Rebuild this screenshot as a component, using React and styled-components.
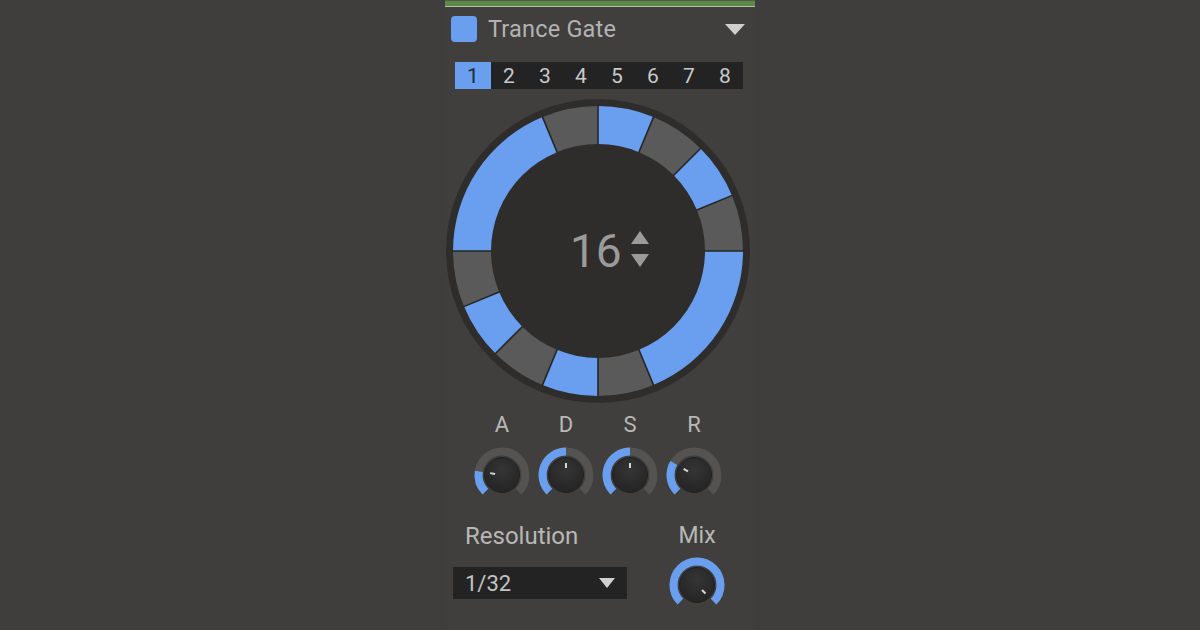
import React from 'react';
import styled, { createGlobalStyle } from 'styled-components';

const BLUE = '#6a9ff0';
const GRAY_SEG = '#5a5a5a';
const DARK = '#2e2d2c';

const GlobalStyle = createGlobalStyle`
  html, body {
    margin: 0;
    padding: 0;
    background: #3f3e3c;
  }
  body {
    font-family: Roboto, "Noto Sans", sans-serif;
  }
`;

const Page = styled.div`
  width: 1200px;
  height: 630px;
  display: flex;
  justify-content: center;
  overflow: hidden;
`;

const Panel = styled.div`
  width: 310px;
  display: flex;
  flex-direction: column;
  background: #403f3d;
`;

const TopBar = styled.div`
  height: 5px;
  background: #5b8a48;
  border-top: 1px solid #55584f;
  border-bottom: 1px solid #b9bdb4;
`;

const Header = styled.div`
  margin-top: 9px;
  height: 26px;
  padding: 0 10px 0 6px;
  display: flex;
  align-items: center;
  gap: 11px;
`;

const ColorSwatch = styled.div`
  width: 26px;
  height: 26px;
  border-radius: 4px;
  background: ${BLUE};
`;

const Title = styled.div`
  flex: 1;
  font-size: 23.5px;
  color: #b3b3b3;
  letter-spacing: 0.2px;
`;

const Triangle = styled.div`
  width: 0;
  height: 0;
  border-left: ${(p) => p.$w / 2}px solid transparent;
  border-right: ${(p) => p.$w / 2}px solid transparent;
  border-${(p) => (p.$up ? 'bottom' : 'top')}: ${(p) => p.$h}px solid ${(p) => p.$color};
`;

const Tabs = styled.div`
  margin: 20px 0 0 10px;
  width: 288px;
  height: 27px;
  display: grid;
  grid-template-columns: repeat(8, 1fr);
  background: #232323;
`;

const Tab = styled.div`
  display: flex;
  align-items: center;
  justify-content: center;
  font-size: 21px;
  color: ${(p) => (p.$active ? '#1f2a3a' : '#c9c9c9')};
  background: ${(p) => (p.$active ? BLUE : 'transparent')};
`;

const RingWrap = styled.div`
  position: relative;
  margin: 10px 0 0 1px;
  width: 304px;
  height: 304px;
`;

const StepCount = styled.div`
  position: absolute;
  left: 124px;
  top: 50%;
  transform: translateY(-50%);
  display: flex;
  align-items: center;
  gap: 9px;
`;

const CountText = styled.div`
  font-size: 46px;
  line-height: 46px;
  color: #9b9b9b;
`;

const Arrows = styled.div`
  display: flex;
  flex-direction: column;
  gap: 10px;
  margin-top: -4px;
`;

const Adsr = styled.div`
  margin: 10px 0 0 25px;
  display: grid;
  grid-template-columns: repeat(4, 64px);
  row-gap: 8px;
`;

const Label = styled.div`
  font-size: ${(p) => p.$size || 22}px;
  line-height: 24px;
  color: #b8b8b8;
  text-align: ${(p) => p.$align || 'center'};
  padding-left: ${(p) => p.$pad || 0}px;
`;

const KnobCell = styled.div`
  display: flex;
  justify-content: center;
`;

const Bottom = styled.div`
  margin: 19px 0 0 8px;
  display: flex;
  gap: 40px;
`;

const Column = styled.div`
  display: flex;
  flex-direction: column;
  gap: ${(p) => p.$gap}px;
  width: ${(p) => p.$w}px;
`;

const Select = styled.div`
  height: 32px;
  background: #232323;
  display: flex;
  align-items: center;
  justify-content: space-between;
  padding: 0 12px 0 12px;
  font-size: 22px;
  color: #c3c3c3;
`;

const pt = (cx, cy, r, a) => {
  const t = (a * Math.PI) / 180;
  return [cx + r * Math.sin(t), cy - r * Math.cos(t)];
};

const sector = (cx, cy, r0, r1, a0, a1) => {
  const large = a1 - a0 > 180 ? 1 : 0;
  const [x1, y1] = pt(cx, cy, r1, a0);
  const [x2, y2] = pt(cx, cy, r1, a1);
  const [x3, y3] = pt(cx, cy, r0, a1);
  const [x4, y4] = pt(cx, cy, r0, a0);
  return `M${x1} ${y1} A${r1} ${r1} 0 ${large} 1 ${x2} ${y2} L${x3} ${y3} A${r0} ${r0} 0 ${large} 0 ${x4} ${y4} Z`;
};

const arc = (cx, cy, r, a0, a1) => {
  const large = a1 - a0 > 180 ? 1 : 0;
  const [x1, y1] = pt(cx, cy, r, a0);
  const [x2, y2] = pt(cx, cy, r, a1);
  return `M${x1} ${y1} A${r} ${r} 0 ${large} 1 ${x2} ${y2}`;
};

const steps = [1, 0, 1, 0, 1, 1, 1, 0, 1, 0, 1, 0, 1, 1, 1, 0];

// group neighbouring steps of the same state into one run
const runs = steps.reduce((acc, on, i) => {
  const last = acc[acc.length - 1];
  if (last && last.on === on) last.end = i + 1;
  else acc.push({ on, start: i, end: i + 1 });
  return acc;
}, []);

const GateRing = () => {
  const c = 152;
  const step = 360 / steps.length;
  return (
    <svg width="304" height="304" viewBox="0 0 304 304">
      <circle cx={c} cy={c} r={152} fill={DARK} />
      {runs.map((r, i) => (
        <path
          key={i}
          d={sector(c, c, 106, 145, r.start * step, r.end * step)}
          fill={r.on ? BLUE : GRAY_SEG}
        />
      ))}
      {runs.map((r, i) => {
        const [x1, y1] = pt(c, c, 105, r.start * step);
        const [x2, y2] = pt(c, c, 146, r.start * step);
        return <line key={i} x1={x1} y1={y1} x2={x2} y2={y2} stroke="#262626" strokeWidth="1.6" />;
      })}
      <circle cx={c} cy={c} r={107} fill={DARK} />
    </svg>
  );
};

const Knob = ({ value }) => {
  const c = 30;
  const end = -135 + 270 * value;
  const [ix1, iy1] = pt(c, c, 7, end);
  const [ix2, iy2] = pt(c, c, 12, end);
  return (
    <svg width="60" height="60" viewBox="0 0 60 60">
      <defs>
        <radialGradient id="knobBody" cx="50%" cy="35%" r="65%">
          <stop offset="0%" stopColor="#353535" />
          <stop offset="100%" stopColor="#242424" />
        </radialGradient>
      </defs>
      <path d={arc(c, c, 23.5, -135, 135)} fill="none" stroke="#545352" strokeWidth="8" />
      {value > 0 && (
        <path d={arc(c, c, 23.5, -135, end)} fill="none" stroke={BLUE} strokeWidth="8" />
      )}
      <circle cx={c} cy={c} r={17.5} fill="url(#knobBody)" stroke="#222" strokeWidth="1" />
      <line x1={ix1} y1={iy1} x2={ix2} y2={iy2} stroke="#d6d6d6" strokeWidth="2" />
    </svg>
  );
};

const envelope = [
  { name: 'A', value: 0.2 },
  { name: 'D', value: 0.5 },
  { name: 'S', value: 0.5 },
  { name: 'R', value: 0.28 },
];

const App = () => {
  return (
    <Page>
      <GlobalStyle />
      <Panel>
        <TopBar />
        <Header>
          <ColorSwatch />
          <Title>Trance Gate</Title>
          <Triangle $w={20} $h={11} $color="#cfcfcf" />
        </Header>

        <Tabs>
          {[1, 2, 3, 4, 5, 6, 7, 8].map((n) => (
            <Tab key={n} $active={n === 1}>
              {n}
            </Tab>
          ))}
        </Tabs>

        <RingWrap>
          <GateRing />
          <StepCount>
            <CountText>16</CountText>
            <Arrows>
              <Triangle $up $w={19} $h={13} $color="#9b9b9b" />
              <Triangle $w={19} $h={13} $color="#9b9b9b" />
            </Arrows>
          </StepCount>
        </RingWrap>

        <Adsr>
          {envelope.map((e) => (
            <Label key={e.name}>{e.name}</Label>
          ))}
          {envelope.map((e) => (
            <KnobCell key={e.name}>
              <Knob value={e.value} />
            </KnobCell>
          ))}
        </Adsr>

        <Bottom>
          <Column $w={174} $gap={19}>
            <Label $size={24} $align="left" $pad={12}>
              Resolution
            </Label>
            <Select>
              1/32
              <Triangle $w={16} $h={10} $color="#d0d0d0" />
            </Select>
          </Column>
          <Column $w={60} $gap={7}>
            <Label $size={23}>Mix</Label>
            <Knob value={1} />
          </Column>
        </Bottom>
      </Panel>
    </Page>
  );
};

export default App;
